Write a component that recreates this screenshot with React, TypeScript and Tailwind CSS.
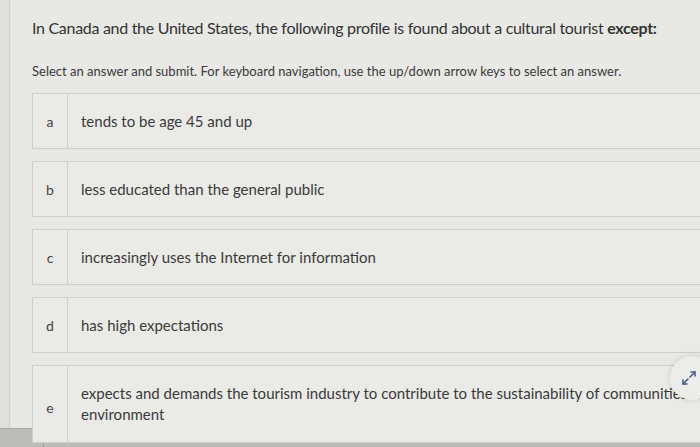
const options = [
  { key: 'a', text: 'tends to be age 45 and up' },
  { key: 'b', text: 'less educated than the general public' },
  { key: 'c', text: 'increasingly uses the Internet for information' },
  { key: 'd', text: 'has high expectations' },
];

function ExpandIcon() {
  return (
    <svg width="18" height="18" viewBox="0 0 18 18" fill="none" stroke="#4b5a86" strokeWidth="1.6" strokeLinecap="round" strokeLinejoin="round">
      <path d="M10 8 L15 3" />
      <path d="M11 3 H15 V7" />
      <path d="M8 10 L3 15" />
      <path d="M3 11 V15 H7" />
    </svg>
  );
}

export default function App() {
  return (
    <div
      className="w-[700px] h-[447px] overflow-hidden bg-[#e8e8e5] flex flex-col text-[#333333]"
      style={{ fontFamily: 'Lato, "Open Sans", sans-serif' }}
    >
      <div className="flex flex-1 min-h-0">
        {/* left edge strip */}
        <div className="w-[10px] shrink-0 bg-[#dfdfdc] border-r border-[#d2d2cf]" />

        <div className="flex-1 min-w-0 pl-[22px] pt-[16px] relative">
          <h1 className="text-[16px] leading-[24px] tracking-[-0.3px] whitespace-nowrap">
            In Canada and the United States, the following profile is found about a cultural tourist <span className="font-bold">except:</span>
          </h1>
          <p className="mt-[22px] text-[13px] leading-[18px] text-[#3a3a3a] whitespace-nowrap">
            Select an answer and submit. For keyboard navigation, use the up/down arrow keys to select an answer.
          </p>

          <div className="mt-[13px] flex flex-col gap-[12px] w-[700px]">
            {options.map((o) => (
              <div key={o.key} className="flex h-[56px] border border-[#cfcfcc] bg-[#eaeae7]">
                <div className="w-[35px] shrink-0 flex items-center justify-center border-r border-[#cfcfcc] text-[14px] text-[#444]">
                  {o.key}
                </div>
                <div className="flex items-center pl-[13px] text-[15px] text-[#3a3a3a] whitespace-nowrap">
                  {o.text}
                </div>
              </div>
            ))}

            <div className="flex h-[78px] border border-[#cfcfcc] bg-[#eaeae7]">
              <div className="w-[35px] shrink-0 flex items-start justify-center pt-[31px] border-r border-[#cfcfcc] text-[14px] text-[#444]">
                e
              </div>
              <div className="pl-[13px] pt-[17px] text-[15px] leading-[21px] text-[#3a3a3a] whitespace-nowrap">
                expects and demands the tourism industry to contribute to the sustainability of communities and the
                <br />
                environment
              </div>
            </div>
          </div>

          {/* expand button overlay */}
          <div className="absolute right-[-14px] top-[356px] w-[44px] h-[44px] rounded-full bg-[#ececea] shadow-[0_0_6px_rgba(0,0,0,0.12)] flex items-center pl-[10px]">
            <ExpandIcon />
          </div>
        </div>
      </div>

      {/* bottom bar */}
      <div className="h-[19px] shrink-0 flex bg-[#bcbcb9] border-t border-[#a9a9a6]">
        <div className="w-[44px] border-r border-[#9d9d9a]" />
      </div>
    </div>
  );
}
